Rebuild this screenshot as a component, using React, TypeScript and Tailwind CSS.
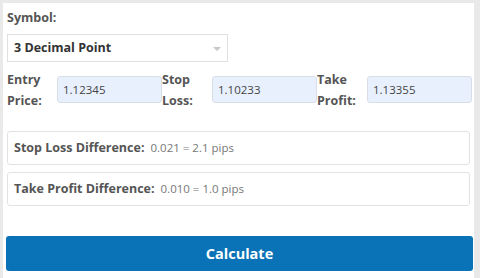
import React from "react";

function Field({ label1, label2, value }: { label1: string; label2: string; value: string }) {
  return (
    <div className="flex w-[155px] items-start">
      <div className="w-[50px] shrink-0 text-[12.5px] font-bold leading-[21px] text-[#555]">
        <div>{label1}</div>
        <div>{label2}</div>
      </div>
      <div className="mt-[7px] flex h-[27px] w-[105px] items-center rounded-[3px] border border-[#d8dde6] bg-[#e8f0fe] px-[5px] text-[11.5px] text-[#444]">
        {value}
      </div>
    </div>
  );
}

function Diff({ label, value }: { label: string; value: string }) {
  return (
    <div className="flex h-[34px] items-center rounded-[3px] border border-[#e2e2e2] px-[6px]">
      <span className="text-[12.5px] font-bold text-[#555]">{label}</span>
      <span className="ml-[6px] text-[11.5px] text-[#777]">{value}</span>
    </div>
  );
}

export default function App() {
  return (
    <div
      className="h-[278px] w-[480px] overflow-hidden bg-[#e9e9e9] pl-[3px] pr-[6px] pt-[3px]"
      style={{ fontFamily: '"Open Sans", "DejaVu Sans", sans-serif' }}
    >
      <div className="flex h-[275px] flex-col bg-white px-[4px]">
        <div className="pt-[8px] text-[12.5px] font-bold leading-[14px] text-[#555]">Symbol:</div>
        <div className="mt-[9px] flex h-[28px] w-[221px] items-center justify-between border border-[#e0e0e0] px-[6px]">
          <span className="text-[12.5px] font-bold text-[#333]">3 Decimal Point</span>
          <svg width="8" height="5" viewBox="0 0 8 5" className="mt-[2px]">
            <path d="M0 0 L8 0 L4 4 Z" fill="#c8c8c8" />
          </svg>
        </div>
        <div className="mt-[7px] flex">
          <Field label1="Entry" label2="Price:" value="1.12345" />
          <Field label1="Stop" label2="Loss:" value="1.10233" />
          <Field label1="Take" label2="Profit:" value="1.13355" />
        </div>
        <div className="mt-[20px] flex flex-col gap-[7px]">
          <Diff label="Stop Loss Difference:" value="0.021 = 2.1 pips" />
          <Diff label="Take Profit Difference:" value="0.010 = 1.0 pips" />
        </div>
        <button className="mt-[30px] h-[35px] w-[467px] -ml-[1px] rounded-[3px] bg-[#0a72b6] text-[14.5px] font-bold text-white">
          Calculate
        </button>
      </div>
    </div>
  );
}
